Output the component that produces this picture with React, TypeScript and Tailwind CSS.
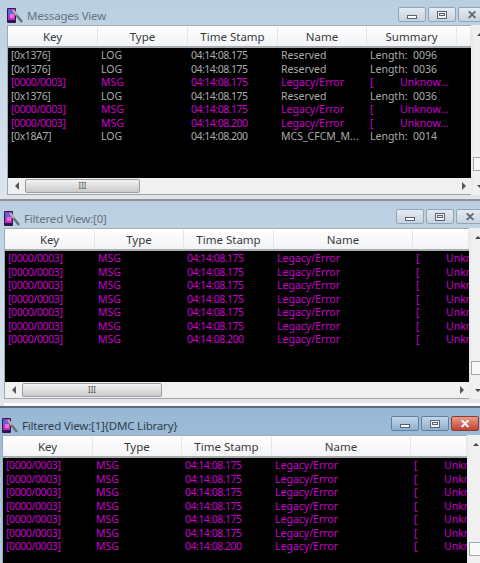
type Row = { key: string; type: string; time: string; name: string; summary?: string; msg?: boolean }
type Col = { label: string; width: number }

const MSG = (time: string): Row => ({ key: '[0000/0003]', type: 'MSG', time, name: 'Legacy/Error', msg: true })

const mainRows: Row[] = [
  { key: '[0x1376]', type: 'LOG', time: '04:14:08.175', name: 'Reserved', summary: 'Length:  0096' },
  { key: '[0x1376]', type: 'LOG', time: '04:14:08.175', name: 'Reserved', summary: 'Length:  0036' },
  MSG('04:14:08.175'),
  { key: '[0x1376]', type: 'LOG', time: '04:14:08.175', name: 'Reserved', summary: 'Length:  0036' },
  MSG('04:14:08.175'),
  MSG('04:14:08.200'),
  { key: '[0x18A7]', type: 'LOG', time: '04:14:08.200', name: 'MCS_CFCM_M...', summary: 'Length:  0014' },
]

const filteredRows: Row[] = [
  MSG('04:14:08.175'),
  MSG('04:14:08.175'),
  MSG('04:14:08.175'),
  MSG('04:14:08.175'),
  MSG('04:14:08.175'),
  MSG('04:14:08.175'),
  MSG('04:14:08.200'),
]

const mainCols: Col[] = [
  { label: 'Key', width: 90 },
  { label: 'Type', width: 90 },
  { label: 'Time Stamp', width: 90 },
  { label: 'Name', width: 89 },
  { label: 'Summary', width: 90 },
  { label: '', width: 14 },
]

const filteredCols: Col[] = [
  { label: 'Key', width: 90 },
  { label: 'Type', width: 89 },
  { label: 'Time Stamp', width: 90 },
  { label: 'Name', width: 139 },
  { label: '', width: 56 },
]

function AppIcon() {
  return (
    <svg width="16" height="16" viewBox="0 0 16 16" className="shrink-0">
      <rect x="0" y="0" width="9" height="15" rx="1" fill="#2a1a4a" />
      <rect x="1" y="1" width="7" height="11" fill="#c32bd0" />
      <rect x="1" y="2" width="4" height="5" fill="#4a6ee0" />
      <rect x="3" y="6" width="4" height="4" fill="#f070c0" />
      <path d="M7 4 L15 14" stroke="#6b6f78" strokeWidth="2.5" />
      <path d="M6 2 L10 7" stroke="#a9aeb8" strokeWidth="2.5" />
    </svg>
  )
}

function CaptionButtons({ active }: { active?: boolean }) {
  const base = 'flex h-[15px] w-[28px] items-center justify-center rounded-[2px] border'
  const plain = active
    ? 'border-[#5f7f9f] bg-gradient-to-b from-[#c3d6e8] to-[#8fb0cf]'
    : 'border-[#93a5b5] bg-gradient-to-b from-[#e4ebf2] to-[#c6d3df]'
  return (
    <div className="flex gap-[2px]">
      <div className={`${base} ${plain}`}>
        <div className="mt-[4px] h-[4px] w-[10px] border border-[#5a6470] bg-white" />
      </div>
      <div className={`${base} ${plain}`}>
        <div className="flex h-[8px] w-[10px] items-center justify-center border border-[#5a6470] bg-[#eef2f6]">
          <div className="h-[3px] w-[6px] border border-[#5a6470]" />
        </div>
      </div>
      <div
        className={`${base} text-[12px] leading-none font-bold ${
          active
            ? 'border-[#8f3a30] bg-gradient-to-b from-[#e89a8c] to-[#c0402f] text-white'
            : `${plain} text-[#5a6470]`
        }`}
      >
        ✕
      </div>
    </div>
  )
}

function ScrollTrack({ thumb, barWidth }: { thumb: number; barWidth: number }) {
  return (
    <div className="flex h-[17px] items-center border-b border-[#a0a4a8] bg-[#f0f0f0]" style={{ width: barWidth }}>
      <div className="flex w-[17px] justify-center">
        <div className="h-0 w-0 border-y-[4px] border-r-[4px] border-y-transparent border-r-[#555]" />
      </div>
      <div
        className="flex h-[14px] items-center justify-center rounded-[2px] border border-[#9aa0a6] bg-gradient-to-b from-[#f4f4f4] to-[#c9c9c9] text-[8px] leading-none text-[#555]"
        style={{ width: thumb }}
      >
        III
      </div>
      <div className="flex flex-1 justify-end pr-[6px]">
        <div className="h-0 w-0 border-y-[4px] border-l-[4px] border-y-transparent border-l-[#555]" />
      </div>
    </div>
  )
}

function VScroll({ height }: { height: number }) {
  return (
    <div className="flex shrink-0 flex-col bg-[#f0f0f0]" style={{ height }}>
      <div className="mt-[8px] ml-[4px] h-0 w-0 border-x-[3px] border-b-[3px] border-x-transparent border-b-[#444]" />
      <div className="flex-1" />
      <div className="mb-[14px] h-[14px] border-y border-l border-[#a5a9ad] bg-[#f8f8f8]" />
      <div className="mb-[7px] ml-[4px] h-0 w-0 border-x-[3px] border-t-[3px] border-x-transparent border-t-[#444]" />
    </div>
  )
}

function ListRow({ row, cols, wide }: { row: Row; cols: Col[]; wide: boolean }) {
  return (
    <div className={`flex h-[13.5px] leading-[13.5px] ${row.msg ? 'text-[#cc00cc]' : 'text-[#ababab]'}`}>
      <div className="overflow-hidden pl-[3px] tracking-[-0.4px] whitespace-nowrap" style={{ width: cols[0].width }}>
        {row.key}
      </div>
      <div className="overflow-hidden pl-[3px] whitespace-nowrap" style={{ width: cols[1].width }}>
        {row.type}
      </div>
      <div className="overflow-hidden pl-[3px] tracking-[-0.5px] whitespace-nowrap" style={{ width: cols[2].width }}>
        {row.time}
      </div>
      <div className="overflow-hidden pl-[3px] whitespace-nowrap" style={{ width: cols[3].width }}>
        {row.name}
      </div>
      {row.msg ? (
        <div className="flex overflow-hidden whitespace-nowrap" style={{ width: cols[4].width }}>
          <span className="w-[33px] shrink-0 pl-[3px]">[</span>
          <span>{wide ? 'Unknow...' : 'Unknown'}</span>
        </div>
      ) : (
        <div className="overflow-hidden pl-[3px] whitespace-pre" style={{ width: cols[4].width }}>
          {row.summary}
        </div>
      )}
    </div>
  )
}

function ViewWindow({
  title,
  rows,
  cols,
  left,
  bodyHeight,
  active,
  thumb,
  tall,
  buttonsRight,
  bottom,
}: {
  title: string
  rows: Row[]
  cols: Col[]
  left: number
  bodyHeight: number
  active?: boolean
  thumb: number
  tall?: boolean
  buttonsRight: number
  bottom?: 'short' | 'strip'
}) {
  const listWidth = cols.reduce((sum, c) => sum + c.width, 0)
  return (
    <section
      className={`flex flex-col ${
        active
          ? 'bg-gradient-to-b from-[#97b7d4] to-[#b8d0e5]'
          : 'bg-gradient-to-b from-[#b9cfe0] via-[#cddce9] to-[#dbe6ef]'
      }`}
    >
      <div className="flex items-start justify-between" style={{ paddingLeft: left, height: tall ? 27 : 25 }}>
        <div
          className={`flex items-center gap-[4px] text-[11.5px] tracking-[-0.2px] ${
            active ? 'text-[#2f3f4f]' : 'text-[#66727e]'
          } ${tall ? 'pt-[9px]' : 'pt-[7px]'}`}
        >
          <AppIcon />
          <span>{title}</span>
        </div>
        <div className={tall ? 'pt-[8px]' : 'pt-[7px]'} style={{ marginRight: buttonsRight }}>
          <CaptionButtons active={active} />
        </div>
      </div>
      <div className="flex" style={{ paddingLeft: left }}>
        <div className="border-l border-[#a0a8b0]" style={{ width: listWidth + 1 }}>
          <div className="flex h-[23px] border-y border-b-2 border-y-[#a8acb0] bg-gradient-to-b from-white to-[#f2f3f5] pt-[1px] text-[11.5px] text-[#3a3a3a]">
            {cols.map((col, i) => (
              <div
                key={i}
                className="flex items-center justify-center border-r border-[#e4e6e8]"
                style={{ width: col.width }}
              >
                {col.label}
              </div>
            ))}
          </div>
          <div className="overflow-hidden bg-black pt-[1px] text-[10.5px]" style={{ height: bodyHeight }}>
            {rows.map((row, i) => (
              <ListRow key={i} row={row} cols={cols} wide={cols.length === 6} />
            ))}
          </div>
          {bodyHeight > 120 && <ScrollTrack thumb={thumb} barWidth={listWidth + 1} />}
        </div>
        <div className="flex-1 bg-[#e8edf2] pl-[2px]">
          <VScroll height={bodyHeight + 40} />
        </div>
      </div>
      {bottom === 'short' && <div className="h-[6px] border-b-2 border-[#8d9399] bg-[#e2e6ea]" />}
      {bottom === 'strip' && (
        <div className="h-[9px] border-b-2 border-[#5d6b78] bg-[#e2e6ea] pt-[4px] pl-[4px]">
          <div className="h-[3px] bg-white" />
        </div>
      )}
    </section>
  )
}

export default function App() {
  return (
    <div className="h-[563px] w-[480px] overflow-hidden bg-white font-['Noto_Sans','Liberation_Sans',sans-serif]">
      <ViewWindow
        title="Messages View"
        rows={mainRows}
        cols={mainCols}
        left={7}
        bodyHeight={130}
        thumb={115}
        buttonsRight={-6}
        bottom="short"
      />
      <ViewWindow
        title="Filtered View:[0]"
        rows={filteredRows}
        cols={filteredCols}
        left={4}
        bodyHeight={131}
        thumb={140}
        buttonsRight={-4}
        bottom="strip"
        tall
      />
      <ViewWindow
        title="Filtered View:[1]{DMC Library}"
        rows={filteredRows}
        cols={filteredCols}
        left={2}
        bodyHeight={105}
        thumb={140}
        buttonsRight={1}
        active
        tall
      />
    </div>
  )
}
